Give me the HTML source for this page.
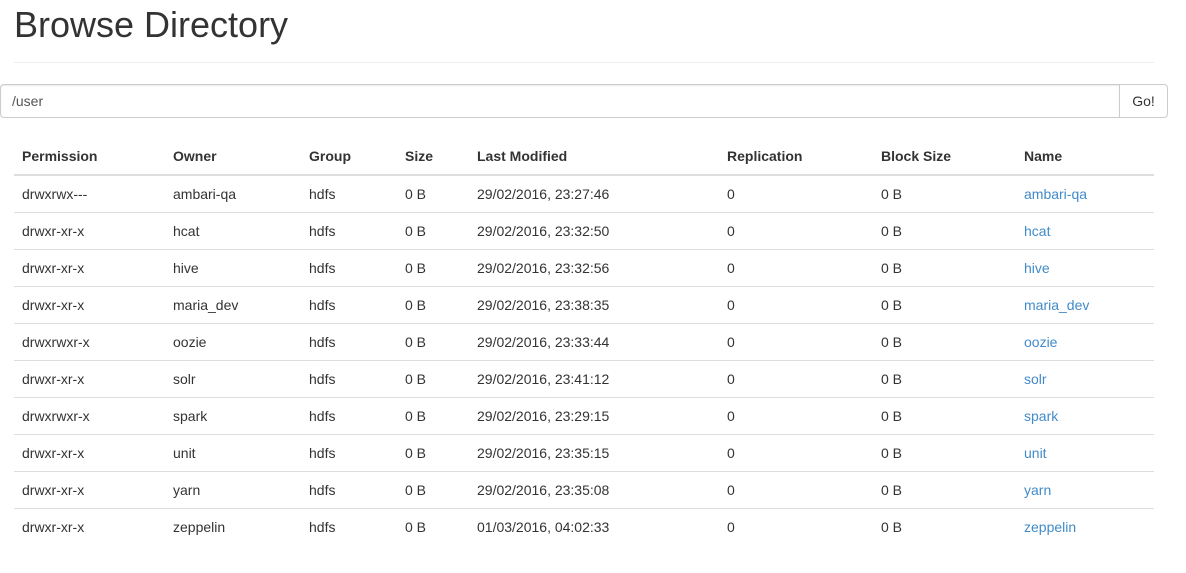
<!DOCTYPE html>
<html><head><meta charset="utf-8"><style>
body{margin:0;background:#fff;font-family:"Liberation Sans",Arial,sans-serif;font-size:14px;color:#333;width:1186px;height:573px;overflow:hidden;position:relative}
h1{position:absolute;left:14px;top:3px;margin:0;font-size:36px;font-weight:normal;line-height:44px;color:#333}
.hr{position:absolute;left:14px;top:62px;width:1140px;height:1px;background:#eee}
.inp{position:absolute;left:0;top:84px;width:1120px;height:34px;border:1px solid #ccc;border-radius:4px 0 0 4px;box-sizing:border-box;box-shadow:inset 0 1px 1px rgba(0,0,0,.075)}
.inp span{position:absolute;left:11px;top:8px;color:#555}
.btn{position:absolute;left:1119px;top:84px;width:49px;height:34px;border:1px solid #ccc;border-radius:0 4px 4px 0;box-sizing:border-box;text-align:center;line-height:32px;color:#333}
table{position:absolute;left:14px;top:137px;border-collapse:collapse;width:1140px}
th{text-align:left;font-weight:bold;padding:0 8px;height:37px;border-bottom:2px solid #ddd;vertical-align:middle}
td{padding:0 8px;height:36px;border-bottom:1px solid #ddd;vertical-align:middle}
tr:last-child td{border-bottom:none}
a{color:#428bca;text-decoration:none}
</style></head><body>
<h1>Browse Directory</h1>
<div class="hr"></div>
<div class="inp"><span>/user</span></div>
<div class="btn">Go!</div>
<table>
<colgroup><col style="width:151px"><col style="width:136px"><col style="width:96px"><col style="width:72px"><col style="width:250px"><col style="width:154px"><col style="width:143px"><col style="width:138px"></colgroup>
<tr><th>Permission</th><th>Owner</th><th>Group</th><th>Size</th><th>Last Modified</th><th>Replication</th><th>Block Size</th><th>Name</th></tr>
<tr><td>drwxrwx---</td><td>ambari-qa</td><td>hdfs</td><td>0 B</td><td>29/02/2016, 23:27:46</td><td>0</td><td>0 B</td><td><a>ambari-qa</a></td></tr>
<tr><td>drwxr-xr-x</td><td>hcat</td><td>hdfs</td><td>0 B</td><td>29/02/2016, 23:32:50</td><td>0</td><td>0 B</td><td><a>hcat</a></td></tr>
<tr><td>drwxr-xr-x</td><td>hive</td><td>hdfs</td><td>0 B</td><td>29/02/2016, 23:32:56</td><td>0</td><td>0 B</td><td><a>hive</a></td></tr>
<tr><td>drwxr-xr-x</td><td>maria_dev</td><td>hdfs</td><td>0 B</td><td>29/02/2016, 23:38:35</td><td>0</td><td>0 B</td><td><a>maria_dev</a></td></tr>
<tr><td>drwxrwxr-x</td><td>oozie</td><td>hdfs</td><td>0 B</td><td>29/02/2016, 23:33:44</td><td>0</td><td>0 B</td><td><a>oozie</a></td></tr>
<tr><td>drwxr-xr-x</td><td>solr</td><td>hdfs</td><td>0 B</td><td>29/02/2016, 23:41:12</td><td>0</td><td>0 B</td><td><a>solr</a></td></tr>
<tr><td>drwxrwxr-x</td><td>spark</td><td>hdfs</td><td>0 B</td><td>29/02/2016, 23:29:15</td><td>0</td><td>0 B</td><td><a>spark</a></td></tr>
<tr><td>drwxr-xr-x</td><td>unit</td><td>hdfs</td><td>0 B</td><td>29/02/2016, 23:35:15</td><td>0</td><td>0 B</td><td><a>unit</a></td></tr>
<tr><td>drwxr-xr-x</td><td>yarn</td><td>hdfs</td><td>0 B</td><td>29/02/2016, 23:35:08</td><td>0</td><td>0 B</td><td><a>yarn</a></td></tr>
<tr><td>drwxr-xr-x</td><td>zeppelin</td><td>hdfs</td><td>0 B</td><td>01/03/2016, 04:02:33</td><td>0</td><td>0 B</td><td><a>zeppelin</a></td></tr>
</table>
</body></html>
